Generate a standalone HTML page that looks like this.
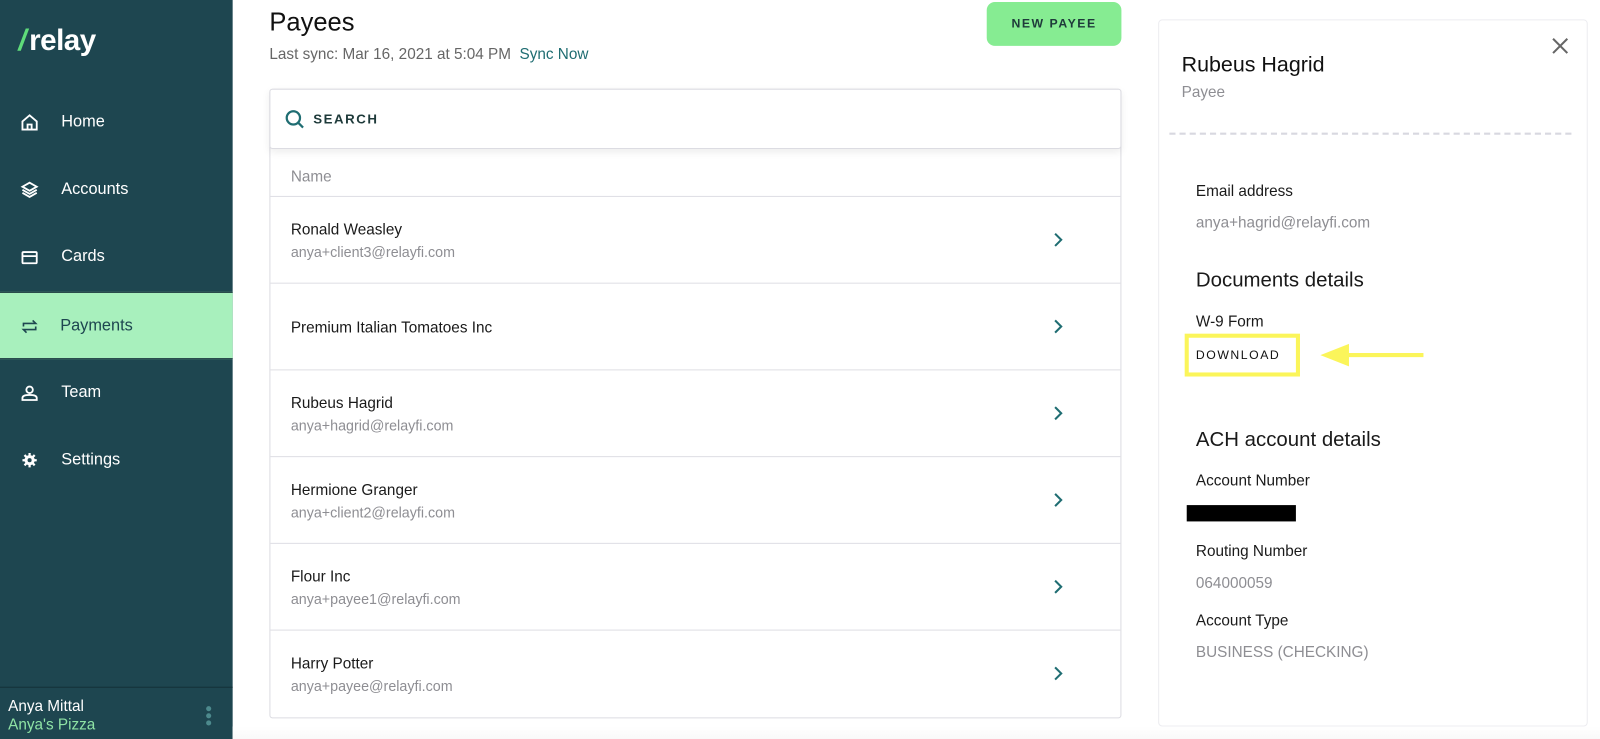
<!DOCTYPE html>
<html><head><style>
*{margin:0;padding:0;box-sizing:border-box}
html,body{width:1600px;height:739px;overflow:hidden;background:#fff}
body{font-family:"Liberation Sans",sans-serif;position:relative}
#w{position:absolute;left:0;top:0;width:1568px;height:725px;transform:scale(1.0204);transform-origin:0 0}
.sb{position:absolute;left:0;top:0;width:228px;height:740px;background:#1e4650}
.logo{position:absolute;left:18px;top:24px;color:#fff;font-size:29px;font-weight:bold;letter-spacing:-0.5px}
.logo span{color:#5fdc7a;font-style:italic;margin-right:3px}
.nav{position:absolute;left:0;width:228px;height:66px;color:#fff;font-size:16px}
.nav svg{position:absolute;left:20px;top:24px}
.nav .t{position:absolute;left:60px;top:24px}
.nav.act{background:#a8f0bd;color:#1e4650;border-top:1px solid #143038;border-bottom:1px solid #143038}
.abs{position:absolute}
.row{position:absolute;left:265px;width:833px;height:85px;border-top:1px solid #dedee4}
.row .n{position:absolute;left:20px;top:24px;font-size:15px;color:#1a1a1a}
.row .e{position:absolute;left:20px;top:46px;font-size:14px;color:#8e8e93}
.row svg{position:absolute;left:766px;top:34px}
.lbl{position:absolute;left:1172px;font-size:15px;color:#1a1a1a}
.val{position:absolute;left:1172px;font-size:15px;color:#8e8e93}
.h{position:absolute;left:1172px;font-size:20px;color:#1a1a1a}
</style></head><body><div id="w">
<div class="sb">
<div class="logo"><span>/</span>relay</div>
<div class="nav" style="top:87px"><svg width="18" height="18" viewBox="0 0 18 18" fill="none" stroke="#fff" stroke-width="1.8"><path d="M2 8L9 2l7 6v8H2z M7 16v-5h4v5"/></svg><div class="t">Home</div></div>
<div class="nav" style="top:153px"><svg width="18" height="18" viewBox="0 0 18 18" fill="none" stroke="#fff" stroke-width="1.8"><path d="M9 2l7 4-7 4-7-4z M2 9l7 4 7-4 M2 12l7 4 7-4"/></svg><div class="t">Accounts</div></div>
<div class="nav" style="top:219px"><svg width="18" height="18" viewBox="0 0 18 18" fill="none" stroke="#fff" stroke-width="1.8"><rect x="2" y="4" width="14" height="11" rx="1"/><path d="M2 8h14"/></svg><div class="t">Cards</div></div>
<div class="nav act" style="top:286px"><svg width="18" height="18" viewBox="0 0 18 18" fill="none" stroke="#1e4650" stroke-width="1.6"><path d="M3 9V6h12l-3-3 M15 9v3H3l3 3"/></svg><div class="t" style="left:59px">Payments</div></div>
<div class="nav" style="top:352px"><svg width="18" height="18" viewBox="0 0 18 18" fill="none" stroke="#fff" stroke-width="1.8"><circle cx="9" cy="6" r="3.2"/><path d="M2 16v-2c0-2 2-3 7-3s7 1 7 3v2z"/></svg><div class="t">Team</div></div>
<div class="nav" style="top:418px"><svg width="18" height="18" viewBox="0 0 18 18"><circle cx="9" cy="9" r="5" fill="#fff"/><path d="M9 2v14M2 9h14M4 4l10 10M14 4L4 14" stroke="#fff" stroke-width="2.2"/><circle cx="9" cy="9" r="2" fill="#1e4650"/></svg><div class="t">Settings</div></div>
<div class="abs" style="left:0;top:673px;width:228px;height:1px;background:#143038"></div>
<div class="abs" style="left:8px;top:684px;color:#fff;font-size:15px">Anya Mittal</div>
<div class="abs" style="left:8px;top:702px;color:#8fe3a5;font-size:15px">Anya's Pizza</div>
<div class="abs" style="left:202px;top:692px;width:5px;height:5px;border-radius:50%;background:#4d8a8d;box-shadow:0 7px 0 #4d8a8d,0 14px 0 #4d8a8d"></div>
</div>

<div class="abs" style="left:264px;top:8px;font-size:25px;color:#111">Payees</div>
<div class="abs" style="left:264px;top:45px;font-size:15px;color:#666">Last sync: Mar 16, 2021 at 5:04 PM&nbsp; <span style="color:#1f6d72">Sync Now</span></div>
<div class="abs" style="left:967px;top:2px;width:132px;height:43px;background:#86ec92;border-radius:8px;font-size:12px;font-weight:bold;letter-spacing:1.5px;color:#1e3a3a;text-align:center;line-height:43px">NEW PAYEE</div>

<div class="abs" style="left:264px;top:87px;width:835px;height:617px;border:1px solid #dcdce2;border-radius:3px"></div>
<div class="abs" style="left:264px;top:87px;width:835px;height:59px;border:1px solid #dcdce2;border-radius:3px;background:#fff;box-shadow:0 3px 8px rgba(0,0,0,.07)">
<svg class="abs" style="left:14px;top:19px" width="20" height="20" viewBox="0 0 20 20" fill="none" stroke="#1f6d72" stroke-width="2.2"><circle cx="8.5" cy="8.5" r="6.5"/><path d="M13 13l5 5"/></svg>
<div class="abs" style="left:42px;top:21px;font-size:13px;font-weight:bold;letter-spacing:1.5px;color:#1e3a3a">SEARCH</div></div>
<div class="abs" style="left:285px;top:165px;font-size:15px;color:#8e8e93">Name</div>

<div class="row" style="top:192px"><div class="n">Ronald Weasley</div><div class="e">anya+client3@relayfi.com</div><svg width="12" height="16" viewBox="0 0 12 16" fill="none" stroke="#1f6d72" stroke-width="2"><path d="M3 2l6 6-6 6"/></svg></div>
<div class="row" style="top:277px"><div class="n" style="top:35px">Premium Italian Tomatoes Inc</div><svg width="12" height="16" viewBox="0 0 12 16" fill="none" stroke="#1f6d72" stroke-width="2"><path d="M3 2l6 6-6 6"/></svg></div>
<div class="row" style="top:362px"><div class="n">Rubeus Hagrid</div><div class="e">anya+hagrid@relayfi.com</div><svg width="12" height="16" viewBox="0 0 12 16" fill="none" stroke="#1f6d72" stroke-width="2"><path d="M3 2l6 6-6 6"/></svg></div>
<div class="row" style="top:447px"><div class="n">Hermione Granger</div><div class="e">anya+client2@relayfi.com</div><svg width="12" height="16" viewBox="0 0 12 16" fill="none" stroke="#1f6d72" stroke-width="2"><path d="M3 2l6 6-6 6"/></svg></div>
<div class="row" style="top:532px"><div class="n">Flour Inc</div><div class="e">anya+payee1@relayfi.com</div><svg width="12" height="16" viewBox="0 0 12 16" fill="none" stroke="#1f6d72" stroke-width="2"><path d="M3 2l6 6-6 6"/></svg></div>
<div class="row" style="top:617px"><div class="n">Harry Potter</div><div class="e">anya+payee@relayfi.com</div><svg width="12" height="16" viewBox="0 0 12 16" fill="none" stroke="#1f6d72" stroke-width="2"><path d="M3 2l6 6-6 6"/></svg></div>
<div class="abs" style="left:228px;top:712px;width:1372px;height:27px;background:linear-gradient(#fff,#f2f2f2)"></div>

<div class="abs" style="left:1135px;top:19px;width:421px;height:693px;border:1px solid #ececf0;border-radius:4px;background:#fff"></div>
<svg class="abs" style="left:1520px;top:36px" width="18" height="18" viewBox="0 0 18 18" stroke="#666" stroke-width="2"><path d="M2 2l14 14M16 2L2 16"/></svg>
<div class="abs" style="left:1158px;top:52px;font-size:21px;color:#111">Rubeus Hagrid</div>
<div class="abs" style="left:1158px;top:82px;font-size:15px;color:#8e8e93">Payee</div>
<div class="abs" style="left:1146px;top:130px;width:394px;border-top:2px dashed #d8d8e0"></div>
<div class="lbl" style="top:179px">Email address</div>
<div class="val" style="top:210px">anya+hagrid@relayfi.com</div>
<div class="h" style="top:264px">Documents details</div>
<div class="lbl" style="top:307px">W-9 Form</div>
<div class="abs" style="left:1161px;top:327px;width:113px;height:42px;border:4px solid #fbf55a"></div>
<div class="abs" style="left:1172px;top:341px;font-size:12px;letter-spacing:1.5px;color:#111">DOWNLOAD</div>
<svg class="abs" style="left:1292px;top:334px" width="106" height="28" viewBox="0 0 106 28"><path d="M28 14h75" stroke="#fbf55a" stroke-width="4"/><path d="M2 14L30 3v22z" fill="#fbf55a"/></svg>
<div class="h" style="top:420px">ACH account details</div>
<div class="lbl" style="top:463px">Account Number</div>
<div class="abs" style="left:1163px;top:495px;width:107px;height:16px;background:#000"></div>
<div class="lbl" style="top:532px">Routing Number</div>
<div class="val" style="top:563px">064000059</div>
<div class="lbl" style="top:600px">Account Type</div>
<div class="val" style="top:631px">BUSINESS (CHECKING)</div>
</div></body></html>
